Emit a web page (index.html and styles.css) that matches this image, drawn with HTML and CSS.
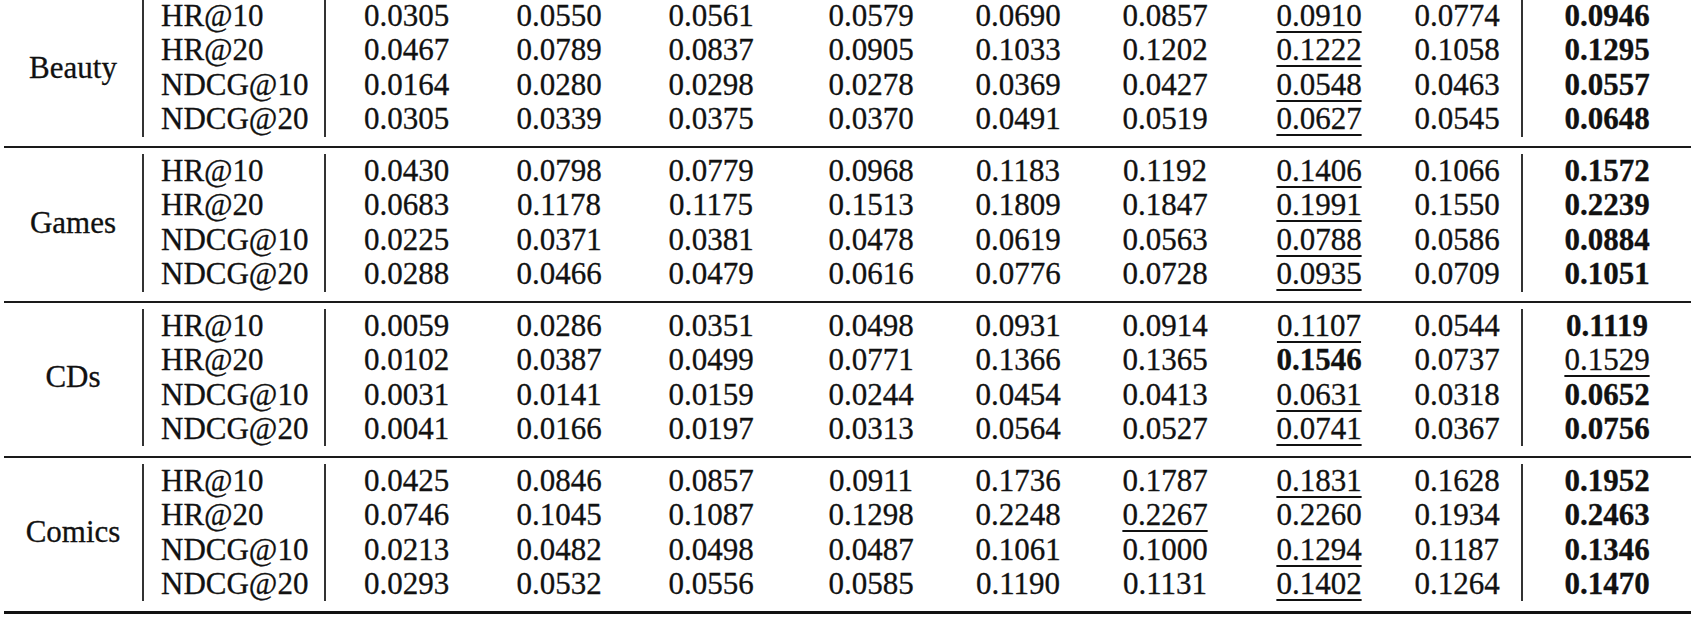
FILE: index.html
```html
<!DOCTYPE html>
<html lang="en">
<head>
  <meta charset="UTF-8">
  <meta name="viewport" content="width=device-width, initial-scale=1.0">
  <title>Results</title>
  <link rel="stylesheet" href="styles.css">
</head>
<body>

  <div class="results">

    <!-- Beauty -->
    <div class="group">
      <div class="dataset">Beauty</div>
      <div class="metric">HR@10</div>
      <div>0.0305</div><div>0.0550</div><div>0.0561</div><div>0.0579</div><div>0.0690</div><div>0.0857</div><div><u>0.0910</u></div><div class="sep">0.0774</div><div><b>0.0946</b></div>
      <div class="metric">HR@20</div>
      <div>0.0467</div><div>0.0789</div><div>0.0837</div><div>0.0905</div><div>0.1033</div><div>0.1202</div><div><u>0.1222</u></div><div class="sep">0.1058</div><div><b>0.1295</b></div>
      <div class="metric">NDCG@10</div>
      <div>0.0164</div><div>0.0280</div><div>0.0298</div><div>0.0278</div><div>0.0369</div><div>0.0427</div><div><u>0.0548</u></div><div class="sep">0.0463</div><div><b>0.0557</b></div>
      <div class="metric">NDCG@20</div>
      <div>0.0305</div><div>0.0339</div><div>0.0375</div><div>0.0370</div><div>0.0491</div><div>0.0519</div><div><u>0.0627</u></div><div class="sep">0.0545</div><div><b>0.0648</b></div>
    </div>

    <!-- Games -->
    <div class="group">
      <div class="dataset">Games</div>
      <div class="metric">HR@10</div>
      <div>0.0430</div><div>0.0798</div><div>0.0779</div><div>0.0968</div><div>0.1183</div><div>0.1192</div><div><u>0.1406</u></div><div class="sep">0.1066</div><div><b>0.1572</b></div>
      <div class="metric">HR@20</div>
      <div>0.0683</div><div>0.1178</div><div>0.1175</div><div>0.1513</div><div>0.1809</div><div>0.1847</div><div><u>0.1991</u></div><div class="sep">0.1550</div><div><b>0.2239</b></div>
      <div class="metric">NDCG@10</div>
      <div>0.0225</div><div>0.0371</div><div>0.0381</div><div>0.0478</div><div>0.0619</div><div>0.0563</div><div><u>0.0788</u></div><div class="sep">0.0586</div><div><b>0.0884</b></div>
      <div class="metric">NDCG@20</div>
      <div>0.0288</div><div>0.0466</div><div>0.0479</div><div>0.0616</div><div>0.0776</div><div>0.0728</div><div><u>0.0935</u></div><div class="sep">0.0709</div><div><b>0.1051</b></div>
    </div>

    <!-- CDs -->
    <div class="group">
      <div class="dataset">CDs</div>
      <div class="metric">HR@10</div>
      <div>0.0059</div><div>0.0286</div><div>0.0351</div><div>0.0498</div><div>0.0931</div><div>0.0914</div><div><u>0.1107</u></div><div class="sep">0.0544</div><div><b>0.1119</b></div>
      <div class="metric">HR@20</div>
      <div>0.0102</div><div>0.0387</div><div>0.0499</div><div>0.0771</div><div>0.1366</div><div>0.1365</div><div><b>0.1546</b></div><div class="sep">0.0737</div><div><u>0.1529</u></div>
      <div class="metric">NDCG@10</div>
      <div>0.0031</div><div>0.0141</div><div>0.0159</div><div>0.0244</div><div>0.0454</div><div>0.0413</div><div><u>0.0631</u></div><div class="sep">0.0318</div><div><b>0.0652</b></div>
      <div class="metric">NDCG@20</div>
      <div>0.0041</div><div>0.0166</div><div>0.0197</div><div>0.0313</div><div>0.0564</div><div>0.0527</div><div><u>0.0741</u></div><div class="sep">0.0367</div><div><b>0.0756</b></div>
    </div>

    <!-- Comics -->
    <div class="group">
      <div class="dataset">Comics</div>
      <div class="metric">HR@10</div>
      <div>0.0425</div><div>0.0846</div><div>0.0857</div><div>0.0911</div><div>0.1736</div><div>0.1787</div><div><u>0.1831</u></div><div class="sep">0.1628</div><div><b>0.1952</b></div>
      <div class="metric">HR@20</div>
      <div>0.0746</div><div>0.1045</div><div>0.1087</div><div>0.1298</div><div>0.2248</div><div><u>0.2267</u></div><div>0.2260</div><div class="sep">0.1934</div><div><b>0.2463</b></div>
      <div class="metric">NDCG@10</div>
      <div>0.0213</div><div>0.0482</div><div>0.0498</div><div>0.0487</div><div>0.1061</div><div>0.1000</div><div><u>0.1294</u></div><div class="sep">0.1187</div><div><b>0.1346</b></div>
      <div class="metric">NDCG@20</div>
      <div>0.0293</div><div>0.0532</div><div>0.0556</div><div>0.0585</div><div>0.1190</div><div>0.1131</div><div><u>0.1402</u></div><div class="sep">0.1264</div><div><b>0.1470</b></div>
    </div>

  </div>

</body>
</html>
```

FILE: styles.css
```css
body {
  margin: 0;
  padding-left: 4px;
  background-color: #fff;
  color: #111;
  font-family: "Liberation Serif", "Times New Roman", serif;
  font-size: 31px;
  overflow: hidden;
}

.results {
  width: 1687px;
  margin-top: -1px;
}

/* One block per dataset: label + 4 metric rows */
.group {
  display: grid;
  grid-template-columns: 140px 182px 161px 144px 160px 160px 134px 160px 148px 130px 168px;
  grid-auto-rows: 34.4px;
  line-height: 34.4px;
  padding: 6px 0 9.4px;
  border-bottom: 2px solid #1a1a1a;
  text-align: center;
  -webkit-text-stroke: 0.3px #111;
}

.group:first-child {
  padding-top: 0;
}

.group:last-child {
  border-bottom: 3px solid #111;
}

.dataset {
  grid-row: span 4;
  display: flex;
  align-items: center;
  justify-content: center;
  border-right: 2px solid #333;
}

.metric {
  text-align: left;
  padding-left: 17px;
  border-right: 2px solid #333;
}

.sep {
  border-right: 2px solid #333;
}

u {
  text-decoration: underline;
  text-decoration-thickness: 1.5px;
  text-underline-offset: 5px;
}

b {
  font-weight: 700;
}
```
